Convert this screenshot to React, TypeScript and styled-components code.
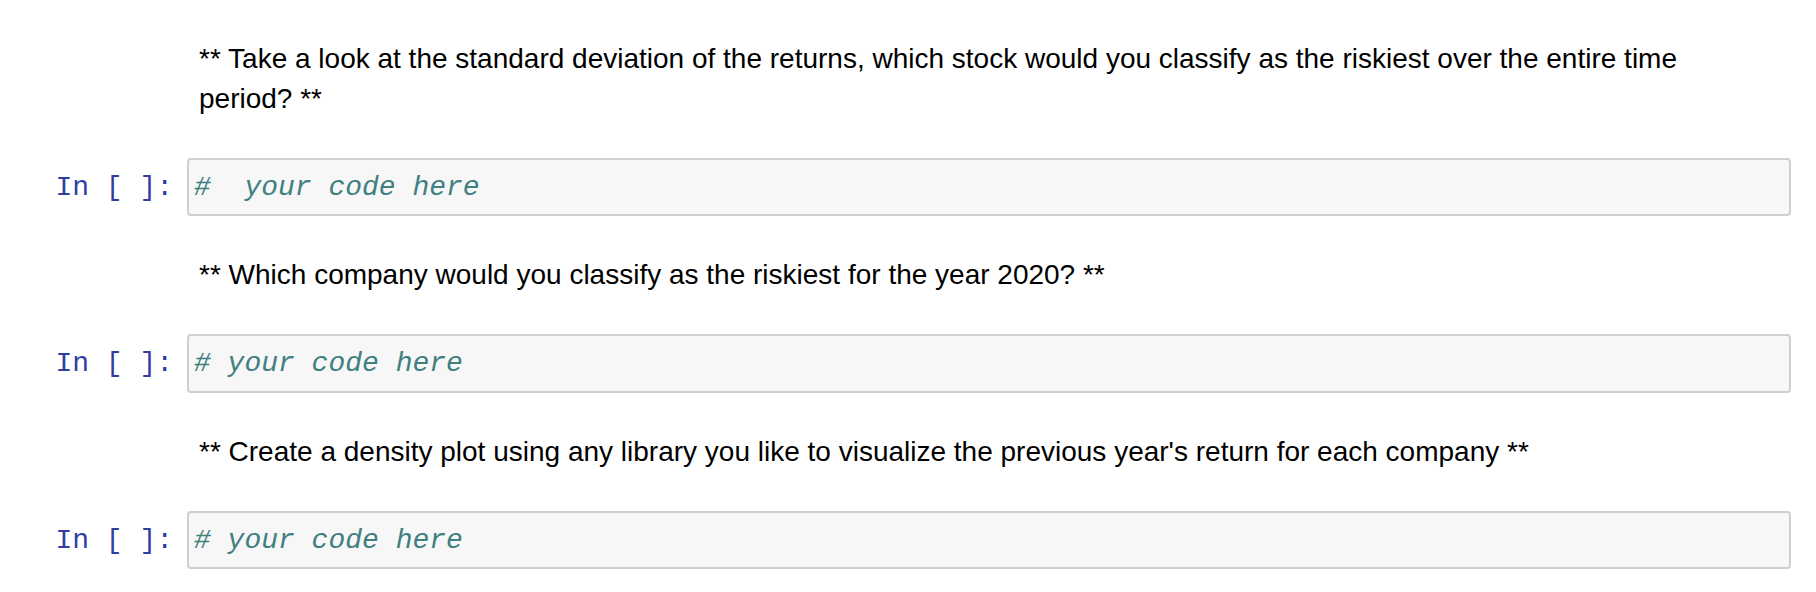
import React from 'react';
import styled, { createGlobalStyle } from 'styled-components';

interface Cell {
  kind: 'markdown' | 'code';
  source: string;
}

const cells: Cell[] = [
  {
    kind: 'markdown',
    source:
      '** Take a look at the standard deviation of the returns, which stock would you classify as the riskiest over the entire time period? **',
  },
  { kind: 'code', source: '#  your code here' },
  { kind: 'markdown', source: '** Which company would you classify as the riskiest for the year 2020? **' },
  { kind: 'code', source: '# your code here' },
  {
    kind: 'markdown',
    source:
      "** Create a density plot using any library you like to visualize the previous year's return for each company **",
  },
  { kind: 'code', source: '# your code here' },
];

const App: React.FC = () => {
  return (
    <>
      <GlobalStyle />
      <Notebook>
        {cells.map((cell, index) =>
          cell.kind === 'markdown' ? (
            <TextCell key={index}>
              <Prompt />
              <RenderedText>{cell.source}</RenderedText>
            </TextCell>
          ) : (
            <CodeCell key={index}>
              <Prompt>In [ ]:</Prompt>
              <InputArea>
                <Comment>{cell.source}</Comment>
              </InputArea>
            </CodeCell>
          )
        )}
      </Notebook>
    </>
  );
};

export default App;

// Styled Components
const GlobalStyle = createGlobalStyle`
  html, body {
    margin: 0;
    padding: 0;
    background: #ffffff;
  }
  body {
    font-family: 'Liberation Sans', Arial, Helvetica, sans-serif;
    color: #000000;
  }
`;

const Notebook = styled.div`
  display: flex;
  flex-direction: column;
  padding: 39px 25px 0 0;
  width: 1816px;
  box-sizing: border-box;
`;

const TextCell = styled.div`
  display: flex;
  align-items: flex-start;
`;

const CodeCell = styled.div`
  display: flex;
  align-items: baseline;
  margin: 39px 0;
`;

const Prompt = styled.div`
  flex: none;
  width: 187px;
  box-sizing: border-box;
  padding-right: 14px;
  text-align: right;
  font-family: 'Liberation Mono', 'Courier New', monospace;
  font-size: 28px;
  line-height: 36.4px;
  color: #303f9f;
  white-space: pre;
`;

const RenderedText = styled.div`
  flex: 1;
  padding: 0 30px 0 12px;
  font-size: 28px;
  line-height: 40px;
`;

const InputArea = styled.div`
  flex: 1;
  border: 2px solid #cfcfcf;
  border-radius: 4px;
  background: #f7f7f7;
  padding: 10px 5px 8px;
  font-family: 'Liberation Mono', 'Courier New', monospace;
  font-size: 28px;
  line-height: 36.4px;
  white-space: pre;
`;

const Comment = styled.span`
  color: #408080;
  font-style: italic;
`;
